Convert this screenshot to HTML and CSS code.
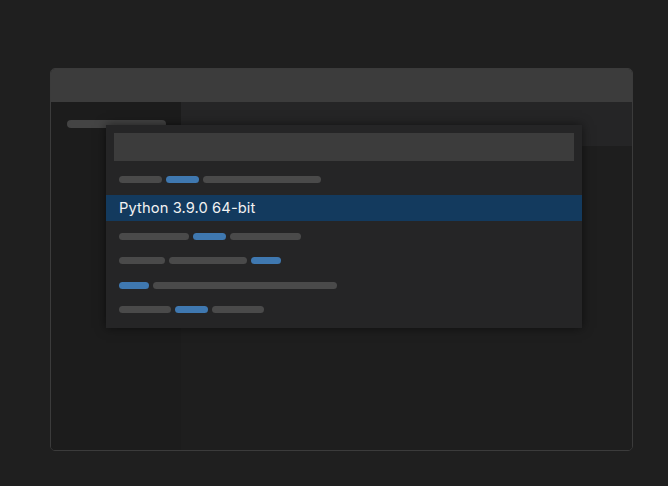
FILE: index.html
```html
<!DOCTYPE html>
<html>
<head>
<meta charset="utf-8">
<link rel="stylesheet" href="styles.css">
</head>
<body>
<div class="stage">
  <div class="window">
    <div class="titlebar"></div>
    <div class="workbench">
      <div class="sidebar">
        <div class="side-pill"></div>
      </div>
      <div class="editor">
        <div class="tabs"></div>
        <div class="editor-body"></div>
      </div>
    </div>
    <div class="quickpick">
      <div class="qp-input"></div>
      <div class="qp-list">
        <div class="row">
          <span class="pill g" style="width:43px"></span>
          <span class="pill b" style="width:33px"></span>
          <span class="pill g" style="width:118px"></span>
        </div>
        <div class="row selected">Python 3.9.0 64-bit</div>
        <div class="row">
          <span class="pill g" style="width:70px"></span>
          <span class="pill b" style="width:33px"></span>
          <span class="pill g" style="width:71px"></span>
        </div>
        <div class="row">
          <span class="pill g" style="width:46px"></span>
          <span class="pill g" style="width:78px"></span>
          <span class="pill b" style="width:30px"></span>
        </div>
        <div class="row">
          <span class="pill b" style="width:30px"></span>
          <span class="pill g" style="width:184px"></span>
        </div>
        <div class="row">
          <span class="pill g" style="width:52px"></span>
          <span class="pill b" style="width:33px"></span>
          <span class="pill g" style="width:52px"></span>
        </div>
      </div>
    </div>
  </div>
</div>
</body>
</html>
```

FILE: styles.css
```css
html, body {
  margin: 0;
  padding: 0;
  background: #1f1f1f;
  width: 668px;
  height: 486px;
  overflow: hidden;
  font-family: Inter, "Open Sans", "Liberation Sans", sans-serif;
}

.stage {
  padding: 68px 0 0 50px;
}

.window {
  position: relative;
  width: 581px;
  height: 381px;
  border: 1px solid #3b3b3b;
  border-radius: 5px;
  overflow: hidden;
  background: #1e1e1e;
  display: flex;
  flex-direction: column;
}

.titlebar {
  height: 33px;
  background: #3c3c3c;
  flex: none;
}

.workbench {
  flex: 1;
  display: flex;
}

.sidebar {
  width: 130px;
  background: #1c1c1c;
  padding: 18px 0 0 16px;
  box-sizing: border-box;
  flex: none;
}

.side-pill {
  width: 99px;
  height: 8px;
  border-radius: 4px;
  background: #444444;
}

.editor {
  flex: 1;
  display: flex;
  flex-direction: column;
}

.tabs {
  height: 44px;
  background: #252526;
  flex: none;
}

.editor-body {
  flex: 1;
  background: #1e1e1e;
}

.quickpick {
  position: absolute;
  left: 55px;
  top: 56px;
  width: 476px;
  height: 203px;
  background: #252526;
  box-shadow: 0 0 10px rgba(0, 0, 0, 0.55);
  padding: 8px 0 0 0;
  box-sizing: border-box;
}

.qp-input {
  margin: 0 8px;
  height: 28px;
  background: #3c3c3c;
}

.qp-list {
  padding-top: 6px;
  display: flex;
  flex-direction: column;
}

.row {
  height: 24.5px;
  display: flex;
  align-items: center;
  gap: 4px;
  padding-left: 13px;
}

.row.selected {
  height: 26px;
  margin: 3.25px 0;
  background: #133a5e;
  color: #f2f2f2;
  font-size: 14.7px;
  font-weight: 400;
  letter-spacing: 0.1px;
}

.pill {
  display: block;
  height: 7px;
  border-radius: 3.5px;
}

.pill.g {
  background: #4a4a4a;
}

.pill.b {
  background: #3f78b0;
}
```
